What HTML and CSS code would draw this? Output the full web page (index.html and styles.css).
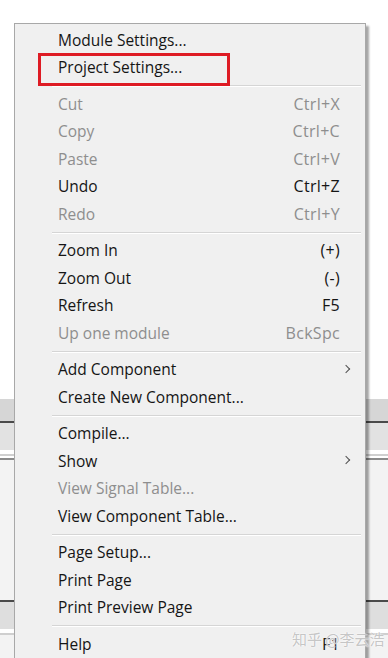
FILE: index.html
```html
<!DOCTYPE html>
<html lang="en">
  <head>
    <meta charset="UTF-8" />
    <title>Context Menu</title>
    <link rel="stylesheet" href="styles.css">
  </head>
  <body>
    <!-- the window behind the popup -->
    <div id="backdrop">
      <div class="blank"></div>
      <div class="toolbar"></div>
      <div class="rule-dark"></div>
      <div class="tabs"></div>
      <div class="rule-light"></div>
      <div class="rule-mid"></div>
      <div class="pane"></div>
      <div class="rule-dark"></div>
      <div class="status"></div>
      <div class="rule-light"></div>
      <div class="pane-end"></div>
    </div>

    <div id="menu">
      <div class="item">Module Settings...</div>
      <div class="item marked">Project Settings...</div>
      <div class="sep"></div>
      <div class="item off">Cut<span class="key">Ctrl+X</span></div>
      <div class="item off">Copy<span class="key">Ctrl+C</span></div>
      <div class="item off">Paste<span class="key">Ctrl+V</span></div>
      <div class="item">Undo<span class="key">Ctrl+Z</span></div>
      <div class="item off">Redo<span class="key">Ctrl+Y</span></div>
      <div class="sep"></div>
      <div class="item">Zoom In<span class="key">(+)</span></div>
      <div class="item">Zoom Out<span class="key">(-)</span></div>
      <div class="item">Refresh<span class="key">F5</span></div>
      <div class="item off">Up one module<span class="key">BckSpc</span></div>
      <div class="sep"></div>
      <div class="item sub">Add Component</div>
      <div class="item">Create New Component...</div>
      <div class="sep"></div>
      <div class="item">Compile...</div>
      <div class="item sub">Show</div>
      <div class="item off">View Signal Table...</div>
      <div class="item">View Component Table...</div>
      <div class="sep"></div>
      <div class="item">Page Setup...</div>
      <div class="item">Print Page</div>
      <div class="item">Print Preview Page</div>
      <div class="sep"></div>
      <div class="item">Help<span class="key">F1</span></div>
    </div>

    <div id="watermark">知乎 @李云浩</div>
  </body>
</html>
```

FILE: styles.css
```css
body,
html {
  margin: 0;
  padding: 0;
}
body {
  width: 388px;
  height: 658px;
  overflow: hidden;
  position: relative;
  background: #ffffff;
  font-family: "Open Sans", "Noto Sans", sans-serif;
}
/* fake window behind the menu */
#backdrop .blank { height: 399px; }
#backdrop .toolbar { height: 22px; background: #d6d6d6; }
#backdrop .rule-dark { height: 2px; background: #4a4a4a; }
#backdrop .tabs { height: 27px; background: #e2e2e2; }
#backdrop .rule-light { height: 4px; background: #ffffff; border-bottom: 2px solid #cfcfcf; }
#backdrop .rule-mid { height: 2px; background: #8a8a8a; margin-top: 2px; }
#backdrop .pane { height: 140px; background: #f3f3f3; }
#backdrop .status { height: 27px; background: #dedede; }
#backdrop .pane-end { height: 40px; background: #f3f3f3; }

/* popup menu */
#menu {
  position: absolute;
  left: 14px;
  top: 23px;
  width: 350px;
  padding-top: 2px;
  background: #f0f0f0;
  border: 1px solid #a8a8a8;
  border-bottom: none;
  box-shadow: 3px 3px 2px rgba(0, 0, 0, 0.35);
  color: #151515;
  font-size: 15.5px;
}
.item {
  display: flex;
  justify-content: space-between;
  align-items: center;
  height: 27.5px;
  padding: 0 25px 0 43px;
  position: relative;
  white-space: nowrap;
}
.item.off {
  color: #8e8e8e;
}
.key {
  font-size: 16px;
  letter-spacing: 0.3px;
}
.sub::after {
  content: "";
  position: absolute;
  right: 16px;
  top: 10px;
  width: 5px;
  height: 5px;
  border-top: 1.6px solid #505050;
  border-right: 1.6px solid #505050;
  transform: rotate(45deg);
}
.marked::before {
  content: "";
  position: absolute;
  left: 23px;
  top: -1px;
  width: 186px;
  height: 27px;
  border: 3px solid #de1b24;
}
.sep {
  height: 1px;
  margin: 4px 4px 3px 37px;
  border-top: 1px solid #d5d5d5;
  background: #ffffff;
}
#watermark {
  position: absolute;
  left: 292px;
  top: 628px;
  font-family: "Noto Sans CJK SC", sans-serif;
  font-size: 15px;
  color: rgba(190, 190, 190, 0.9);
  text-shadow: 0 0 2px #ffffff, 0 0 1px #ffffff;
}
```
